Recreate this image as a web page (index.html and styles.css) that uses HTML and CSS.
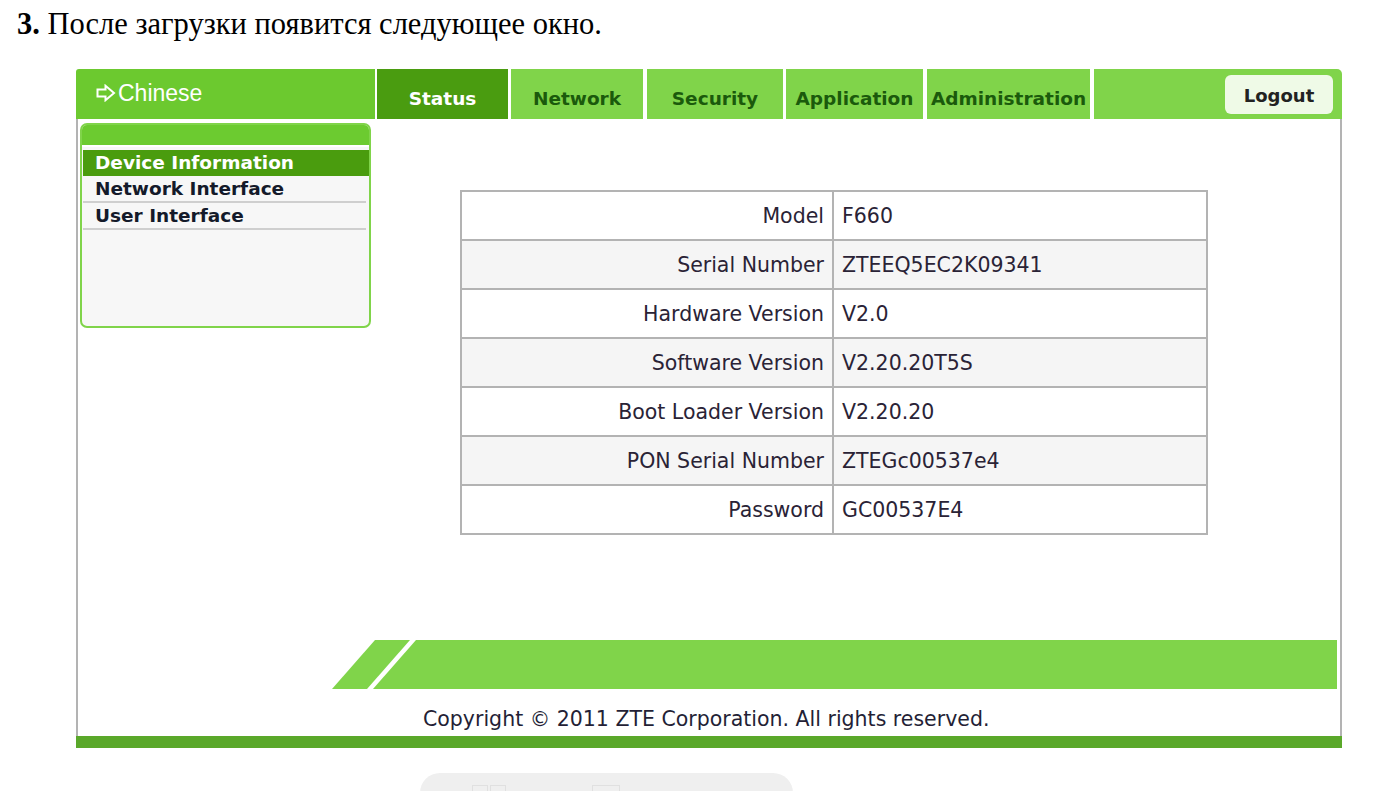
FILE: index.html
```html
<!DOCTYPE html>
<html lang="ru">
<head>
    <meta charset="UTF-8">
    <meta name="viewport" content="width=device-width, initial-scale=1.0">
    <title>Device Information</title>
    <link rel="stylesheet" href="styles.css">
</head>
<body>
    <p class="intro"><b>3.</b> После загрузки появится следующее окно.</p>

    <div class="frame">
        <div class="topbar">
            <div class="brand">
                <svg class="brand-arrow" width="20" height="18" viewBox="0 0 20 18">
                    <path d="M1.5 5.5 H9.5 V1.8 L18 9 L9.5 16.2 V12.5 H1.5 Z" fill="none" stroke="#fff" stroke-width="2" stroke-linejoin="miter"/>
                </svg>
                <span>Chinese</span>
            </div>
            <div class="tab active tab-status">Status</div>
            <div class="tab tab-network">Network</div>
            <div class="tab tab-security">Security</div>
            <div class="tab tab-application">Application</div>
            <div class="tab tab-admin">Administration</div>
            <div class="tab-rest">
                <button class="logout-btn">Logout</button>
            </div>
        </div>

        <div class="page">
            <div class="content">
                <div class="sidebar">
                    <div class="sidebar-head"></div>
                    <ul class="menu">
                        <li class="active">Device Information</li>
                        <li>Network Interface</li>
                        <li>User Interface</li>
                    </ul>
                </div>

                <div class="main">
                    <table class="info">
                        <tr><td class="label">Model</td><td class="value">F660</td></tr>
                        <tr><td class="label">Serial Number</td><td class="value">ZTEEQ5EC2K09341</td></tr>
                        <tr><td class="label">Hardware Version</td><td class="value">V2.0</td></tr>
                        <tr><td class="label">Software Version</td><td class="value">V2.20.20T5S</td></tr>
                        <tr><td class="label">Boot Loader Version</td><td class="value">V2.20.20</td></tr>
                        <tr><td class="label">PON Serial Number</td><td class="value">ZTEGc00537e4</td></tr>
                        <tr><td class="label">Password</td><td class="value">GC00537E4</td></tr>
                    </table>
                </div>
            </div>

            <svg class="stripe" width="1005" height="49" viewBox="0 0 1005 49">
                <polygon points="0,49 43,0 78,0 35,49" fill="#80d44a"/>
                <polygon points="41,49 84,0 1005,0 1005,49" fill="#80d44a"/>
            </svg>

            <div class="copyright">Copyright © 2011 ZTE Corporation. All rights reserved.</div>
        </div>
        <div class="bottom-bar"></div>
    </div>

    <div class="toolbar">
        <span class="tb-icon tb-a"></span>
        <span class="tb-icon tb-b"></span>
        <span class="tb-icon tb-c"></span>
    </div>
</body>
</html>
```

FILE: styles.css
```css
body {
    margin: 0;
    background-color: #fff;
    font-family: 'DejaVu Sans', Verdana, sans-serif;
    overflow: hidden;
}

.intro {
    font-family: 'Liberation Serif', 'Times New Roman', serif;
    font-size: 30.5px;
    margin: 0;
    padding: 7px 0 0 17px;
    height: 69px;
    box-sizing: border-box;
    color: #000;
}

.frame {
    width: 1266px;
    margin-left: 76px;
}

.topbar {
    display: flex;
    height: 50px;
}

.brand {
    width: 299px;
    background-color: #6cc92f;
    color: #fff;
    font-family: 'Liberation Sans', Arial, sans-serif;
    font-size: 23px;
    display: flex;
    align-items: center;
    padding: 0 0 2px 20px;
    box-sizing: border-box;
    margin-right: 2px;
    border-top-left-radius: 3px;
}

.brand-arrow {
    margin-right: 2px;
}

.tab {
    background-color: #80d44a;
    color: #1b5a0c;
    font-weight: bold;
    font-size: 18.5px;
    display: flex;
    align-items: center;
    justify-content: center;
    padding-top: 8px;
    box-sizing: border-box;
    margin-right: 3px;
}

.tab.active {
    background-color: #4a9c10;
    color: #fff;
}

.tab-status { width: 131px; }
.tab-network { width: 132px; margin-right: 4px; }
.tab-security { width: 136px; }
.tab-application { width: 137px; margin-right: 4px; }
.tab-admin { width: 163px; margin-right: 4px; }

.tab-rest {
    flex: 1;
    background-color: #80d44a;
    border-top-right-radius: 5px;
    display: flex;
    justify-content: flex-end;
    padding: 6px 9px 0 0;
    box-sizing: border-box;
}

.logout-btn {
    width: 108px;
    height: 39px;
    border: none;
    border-radius: 6px;
    background-color: #effae7;
    color: #222;
    font-family: 'DejaVu Sans', Verdana, sans-serif;
    font-weight: bold;
    font-size: 18px;
    padding: 2px 0 0;
}

.page {
    border-left: 2px solid #b3b3b3;
    border-right: 2px solid #b3b3b3;
}

.content {
    display: flex;
    height: 521px;
}

.sidebar {
    width: 291px;
    height: 205px;
    margin: 4px 0 0 2px;
    border: 2px solid #80d44a;
    border-radius: 7px;
    background-color: #f7f7f7;
    box-sizing: border-box;
    overflow: hidden;
}

.sidebar-head {
    height: 20px;
    background-color: #6ccb30;
    border-bottom: 2px solid #fff;
}

.menu {
    list-style: none;
    margin: 3px 0 0 1px;
    padding: 0;
    width: 286px;
}

.menu li {
    height: 25px;
    line-height: 25px;
    padding-left: 12px;
    font-weight: bold;
    font-size: 18.5px;
    color: #141a2a;
    border-bottom: 2px solid #cfcfcf;
    margin-right: 3px;
    white-space: nowrap;
}

.menu li.active {
    background-color: #4a9c0e;
    color: #fff;
    border-bottom: none;
    height: 26px;
    margin-right: 0;
}

.main {
    flex: 1;
    padding: 71px 0 0 89px;
}

.info {
    border-collapse: collapse;
    border: 2px solid #a9a9a9;
    width: 748px;
    font-size: 20.5px;
    color: #2a2336;
}

.info tr {
    height: 49px;
}

.info td {
    border: 2px solid #b3b3b3;
    padding: 0 8px;
    white-space: nowrap;
}

.info tr:nth-child(even) td {
    background-color: #f5f5f5;
}

.info td.label {
    width: 354px;
    text-align: right;
}

.stripe {
    display: block;
    margin-left: 254px;
}

.copyright {
    height: 47px;
    font-size: 20.5px;
    color: #241f36;
    padding: 18px 0 0 345px;
    box-sizing: border-box;
    white-space: nowrap;
}

.bottom-bar {
    height: 12px;
    background-color: #5aa82a;
}

.toolbar {
    width: 373px;
    height: 40px;
    margin: 25px 0 0 420px;
    background-color: #efefef;
    border-radius: 20px;
    position: relative;
}

.tb-icon {
    position: absolute;
    top: 12px;
    width: 14px;
    height: 10px;
    border: 1px solid #e0e0e0;
}

.tb-a { left: 52px; }
.tb-b { left: 70px; }
.tb-c { left: 172px; width: 26px; }
```
